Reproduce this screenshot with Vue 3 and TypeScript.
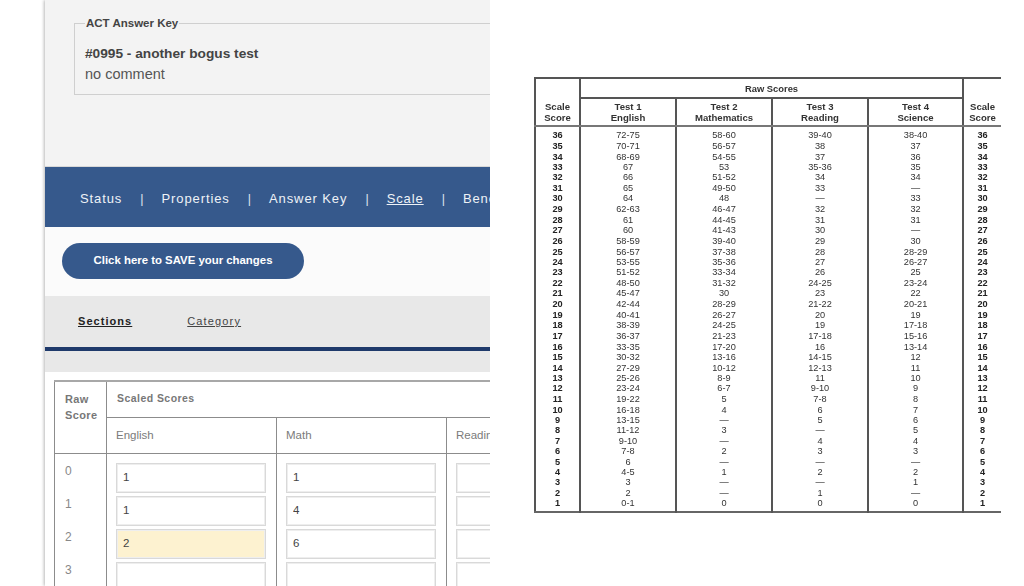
<script setup lang="ts">
const links = ['Status', 'Properties', 'Answer Key', 'Scale', 'Benchmarks']

const scale: number[] = Array.from({ length: 36 }, (_, i) => 36 - i)
const english = '72-75,70-71,68-69,67,66,65,64,62-63,61,60,58-59,56-57,53-55,51-52,48-50,45-47,42-44,40-41,38-39,36-37,33-35,30-32,27-29,25-26,23-24,19-22,16-18,13-15,11-12,9-10,7-8,6,4-5,3,2,0-1'.split(',')
const math = '58-60,56-57,54-55,53,51-52,49-50,48,46-47,44-45,41-43,39-40,37-38,35-36,33-34,31-32,30,28-29,26-27,24-25,21-23,17-20,13-16,10-12,8-9,6-7,5,4,—,3,—,2,—,1,—,—,0'.split(',')
const reading = '39-40,38,37,35-36,34,33,—,32,31,30,29,28,27,26,24-25,23,21-22,20,19,17-18,16,14-15,12-13,11,9-10,7-8,6,5,—,4,3,—,2,—,1,0'.split(',')
const science = '38-40,37,36,35,34,—,33,32,31,—,30,28-29,26-27,25,23-24,22,20-21,19,17-18,15-16,13-14,12,11,10,9,8,7,6,5,4,3,—,2,1,—,0'.split(',')
const centers = [135,146,157,167,177,188,198,209,220,229,240,251,261,271,282,292,303,314,323,334,345,355,366,376,386,397,408,418,428,439,449,460,470,480,491,501]

const rows = scale.map((s, i) => ({
  s,
  e: english[i],
  m: math[i],
  r: reading[i],
  c: science[i],
  h: i < 35 ? centers[i + 1] - centers[i] : 14,
}))

const rawScores = [0, 1, 2, 3]
const englishVals = ['1', '1', '2', '']
const mathVals = ['1', '4', '6', '']
const readingVals = ['', '', '', '']
</script>

<template>
  <div class="page">
    <section class="left">
      <div class="panel">
        <div class="top">
          <fieldset class="key">
            <legend>ACT Answer Key</legend>
            <div class="key-title">#0995 - another bogus test</div>
            <div class="key-note">no comment</div>
          </fieldset>
        </div>

        <nav class="nav">
          <template v-for="(l, i) in links" :key="l">
            <span v-if="i > 0" class="sep">|</span>
            <a class="nav-link" :class="{ active: l === 'Scale' }">{{ l }}</a>
          </template>
        </nav>

        <div class="save-row">
          <button class="save">Click here to SAVE your changes</button>
        </div>

        <div class="tabs">
          <a class="tab on">Sections</a>
          <a class="tab">Category</a>
        </div>
        <div class="tabs-foot"></div>

        <table class="scores">
          <colgroup>
            <col class="c-raw" />
            <col class="c-sub" />
            <col class="c-sub" />
            <col class="c-sub" />
          </colgroup>
          <thead>
            <tr>
              <th rowspan="2" class="raw-h">Raw<br />Score</th>
              <th colspan="3" class="scaled-h">Scaled Scores</th>
            </tr>
            <tr>
              <th class="sub-h">English</th>
              <th class="sub-h">Math</th>
              <th class="sub-h">Reading</th>
            </tr>
          </thead>
          <tbody>
            <tr>
              <td class="raw-cell">
                <div v-for="r in rawScores" :key="r" class="raw-val">{{ r }}</div>
              </td>
              <td class="in-cell">
                <input
                  v-for="(v, i) in englishVals"
                  :key="i"
                  class="score"
                  :class="{ hl: i === 2 }"
                  :value="v"
                />
              </td>
              <td class="in-cell">
                <input v-for="(v, i) in mathVals" :key="i" class="score" :value="v" />
              </td>
              <td class="in-cell">
                <input v-for="(v, i) in readingVals" :key="i" class="score" :value="v" />
              </td>
            </tr>
          </tbody>
        </table>
      </div>
    </section>

    <section class="right">
      <table class="act">
        <colgroup>
          <col class="a-s" />
          <col class="a-t" />
          <col class="a-t" />
          <col class="a-t" />
          <col class="a-t4" />
          <col class="a-e" />
        </colgroup>
        <thead>
          <tr class="h1">
            <th class="b-l"></th>
            <th colspan="4" class="raw-title">Raw Scores</th>
            <th class="b-l"></th>
          </tr>
          <tr class="h2">
            <th class="b-l">Scale<br />Score</th>
            <th class="b-l">Test 1<br />English</th>
            <th class="b-l">Test 2<br />Mathematics</th>
            <th class="b-l">Test 3<br />Reading</th>
            <th class="b-l">Test 4<br />Science</th>
            <th class="b-l">Scale<br />Score</th>
          </tr>
        </thead>
        <tbody>
          <tr class="pad-top">
            <td v-for="n in 6" :key="n"></td>
          </tr>
          <tr v-for="r in rows" :key="r.s" :style="{ height: r.h + 'px' }">
            <td class="sc">{{ r.s }}</td>
            <td>{{ r.e }}</td>
            <td>{{ r.m }}</td>
            <td>{{ r.r }}</td>
            <td>{{ r.c }}</td>
            <td class="sc">{{ r.s }}</td>
          </tr>
        </tbody>
      </table>
    </section>
  </div>
</template>

<style>
html,
body {
  margin: 0;
  background: #fff;
  overflow: hidden;
}
</style>

<style scoped>
.page {
  display: flex;
  width: 1024px;
  height: 586px;
  overflow: hidden;
  background: #fff;
  font-family: 'Liberation Sans', Arial, sans-serif;
}

.left {
  flex: 0 0 490px;
  width: 490px;
  height: 586px;
  overflow: hidden;
  padding-left: 45px;
  box-sizing: border-box;
}
.panel {
  width: 640px;
  height: 586px;
  background: #fff;
  box-shadow: -1px 0 3px rgba(0, 0, 0, 0.28);
}

.top {
  height: 167px;
  box-sizing: border-box;
  background: #f3f3f3;
  padding: 16px 0 0 29px;
  border-bottom: 1px solid #d8d8d8;
}
.key {
  width: 600px;
  height: 79px;
  margin: 0;
  padding: 14px 10px 0;
  box-sizing: border-box;
  border: 1px solid #cfcfcf;
}
.key legend {
  margin-left: 0;
  padding: 0 1px;
  font-size: 11.5px;
  font-weight: 700;
  color: #444;
  line-height: 14px;
}
.key-title {
  font-size: 13.7px;
  font-weight: 700;
  line-height: 20px;
  color: #444;
}
.key-note {
  font-size: 14.5px;
  line-height: 21px;
  color: #555;
}

.nav {
  height: 60px;
  box-sizing: border-box;
  display: flex;
  align-items: center;
  gap: 18px;
  padding: 3px 0 0 35px;
  background: #36598c;
  color: #fff;
  white-space: nowrap;
}
.nav-link {
  font-size: 13px;
  letter-spacing: 0.9px;
  color: #eef2f7;
}
.nav-link.active {
  text-decoration: underline;
}
.sep {
  font-size: 12.5px;
  color: #dfe6ef;
}

.save-row {
  height: 69px;
  box-sizing: border-box;
  padding: 16px 0 0 17px;
  background: #fbfbfb;
}
.save {
  display: block;
  width: 242px;
  height: 36px;
  border: 0;
  border-radius: 18px;
  background: #36598c;
  color: #fff;
  font-family: inherit;
  font-size: 11.4px;
  font-weight: 700;
  padding: 0 0 2px;
}

.tabs {
  height: 51px;
  box-sizing: border-box;
  display: flex;
  align-items: center;
  gap: 55px;
  padding: 0 0 1px 33px;
  background: #e8e8e8;
  border-bottom: 0;
}
.tab {
  font-size: 11px;
  letter-spacing: 1.15px;
  color: #444;
  text-decoration: underline;
}
.tab.on {
  font-weight: 700;
  color: #222;
  letter-spacing: 1.05px;
}
.tabs-foot {
  height: 21px;
  background: #e8e8e8;
  border-top: 4px solid #1f3a6b;
}

.scores {
  margin: 8px 0 0 9px;
  width: 562px;
  table-layout: fixed;
  border-collapse: collapse;
  font-family: inherit;
  color: #777;
}
.c-raw {
  width: 52px;
}
.c-sub {
  width: 170px;
}
.scores th,
.scores td {
  border: 1px solid #8c8c8c;
  box-sizing: border-box;
  text-align: left;
  font-weight: 400;
  vertical-align: top;
}
.scores thead tr:first-child th {
  border-top: 2px solid #a8a8a8;
}
.raw-h {
  padding: 9px 0 0 10px;
  font-size: 11px;
  line-height: 16px;
  letter-spacing: 0.4px;
  font-weight: 700 !important;
  color: #777;
}
.scaled-h {
  height: 36px;
  padding: 8px 0 0 10px;
  font-size: 10.5px;
  line-height: 16px;
  letter-spacing: 0.45px;
  font-weight: 700 !important;
  color: #777;
}
.sub-h {
  height: 36px;
  padding: 9px 0 0 9px;
  font-size: 11.5px;
  line-height: 16px;
  color: #7b7b7b;
}
.raw-cell {
  padding: 10px 0 0 10px;
  font-size: 12px;
  color: #888;
}
.raw-val {
  height: 33.33px;
  line-height: 14px;
}
.in-cell {
  padding: 9px 0 0 9px;
  height: 140px;
}
.score {
  display: block;
  width: 150px;
  height: 30px;
  margin: 0 0 3.33px;
  padding: 0 0 2px 6px;
  box-sizing: border-box;
  border: 1px solid #d9d9d9;
  box-shadow: inset 0 0 0 1px #eeeeee;
  background: #fff;
  font-family: inherit;
  font-size: 11.5px;
  color: #444;
  outline: none;
}
.score.hl {
  background: #fdf2d0;
}

.right {
  flex: 1;
  padding: 77px 0 0 44px;
  overflow: hidden;
}
.act {
  width: 466px;
  table-layout: fixed;
  border-collapse: collapse;
  font-size: 9.2px;
  color: #333;
  filter: blur(0.5px);
  border-top: 2px solid #555;
  border-bottom: 2px solid #666;
  border-left: 2px solid #555;
}
.a-s {
  width: 45px;
}
.a-t {
  width: 96px;
}
.a-t4 {
  width: 95px;
}
.a-e {
  width: 38px;
}
.act th {
  padding: 0;
  font-weight: 700;
  font-size: 9.6px;
  text-align: center;
  line-height: 11px;
  vertical-align: middle;
}
.act td {
  padding: 0;
  text-align: center;
  vertical-align: top;
  line-height: 10px;
  border-left: 2px solid #555;
}
.act td:first-child {
  border-left: 0;
}
.act .sc {
  font-weight: 700;
  color: #222;
}
.act .b-l {
  border-left: 2px solid #555;
}
.act th:first-child {
  border-left: 0;
}
.h1 th {
  height: 18px;
}
.act .raw-title {
  border-left: 2px solid #555;
  border-bottom: 2px solid #555;
  font-size: 9.4px;
}
.h2 th {
  height: 26px;
  border-bottom: 2px solid #777;
}
.pad-top td {
  height: 3px;
  line-height: 0;
  font-size: 0;
}
</style>
